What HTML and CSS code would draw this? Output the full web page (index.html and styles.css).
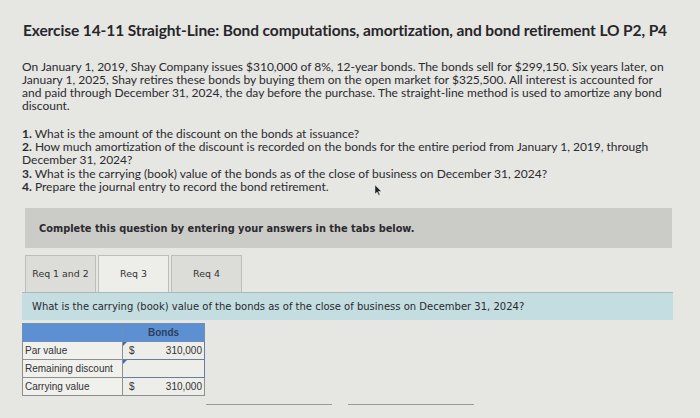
FILE: index.html
```html
<!DOCTYPE html>
<html>
<head>
<meta charset="utf-8">
<link rel="stylesheet" href="styles.css">
</head>
<body>
<div class="page">
  <h1 class="title">Exercise 14-11 Straight-Line: Bond computations, amortization, and bond retirement LO P2, P4</h1>
  <p class="intro">On January 1, 2019, Shay Company issues $310,000 of 8%, 12-year bonds. The bonds sell for $299,150. Six years later, on January 1, 2025, Shay retires these bonds by buying them on the open market for $325,500. All interest is accounted for and paid through December 31, 2024, the day before the purchase. The straight-line method is used to amortize any bond discount.</p>
  <ol class="questions">
    <li><b>1.</b> What is the amount of the discount on the bonds at issuance?</li>
    <li><b>2.</b> How much amortization of the discount is recorded on the bonds for the entire period from January 1, 2019, through December 31, 2024?</li>
    <li><b>3.</b> What is the carrying (book) value of the bonds as of the close of business on December 31, 2024?</li>
    <li><b>4.</b> Prepare the journal entry to record the bond retirement.</li>
  </ol>
  <svg class="cursor" width="8" height="12" viewBox="0 0 8 12"><path d="M1 1 L1 10 L3.1 8.1 L4.7 11.3 L5.9 10.7 L4.4 7.5 L7.2 7.3 Z" fill="#222" stroke="#ddd" stroke-width="0.5"/></svg>
  <div class="instruct">Complete this question by entering your answers in the tabs below.</div>
  <div class="tabs">
    <div class="tab">Req 1 and 2</div>
    <div class="tab active">Req 3</div>
    <div class="tab">Req 4</div>
  </div>
  <div class="prompt">What is the carrying (book) value of the bonds as of the close of business on December 31, 2024?</div>
  <div class="answer">
    <table class="grid">
      <tr class="head"><th class="lbl"></th><th class="val">Bonds</th></tr>
      <tr><td class="lbl">Par value</td><td class="val input"><span class="cur">$</span><span class="num">310,000</span></td></tr>
      <tr><td class="lbl">Remaining discount</td><td class="val input"><span class="cur"></span><span class="num"></span></td></tr>
      <tr><td class="lbl">Carrying value</td><td class="val"><span class="cur">$</span><span class="num">310,000</span></td></tr>
    </table>
  </div>
  <div class="navlines"><span class="line"></span><span class="line"></span></div>
</div>
</body>
</html>
```
FILE: styles.css
```css
html, body {
  margin: 0;
  padding: 0;
  background: #e6e6e2;
}
.page {
  position: relative;
  width: 700px;
  height: 418px;
  overflow: hidden;
  box-sizing: border-box;
  padding: 21px 0 0 22px;
  color: #2b2b30;
  font-family: Lato, "Open Sans", sans-serif;
}
.title {
  margin: 0 0 0 1px;
  font-size: 15.5px;
  font-weight: 700;
  line-height: 18px;
  letter-spacing: -0.1px;
  color: #26262b;
}
.intro {
  margin: 21px 0 0 0;
  width: 652px;
  font-size: 12px;
  line-height: 13px;
}
.questions {
  list-style: none;
  margin: 15px 0 0 0;
  padding: 0;
  width: 650px;
  font-size: 12px;
  line-height: 13.2px;
}
.questions b { font-weight: 700; }
.cursor {
  position: absolute;
  left: 374px;
  top: 184px;
}
.instruct {
  margin: 15px 0 0 3px;
  width: 647px;
  height: 40px;
  box-sizing: border-box;
  padding: 15px 0 0 14px;
  background: #cbcbc8;
  font-family: Verdana, "DejaVu Sans", sans-serif;
  font-weight: 700;
  font-size: 9.8px;
  color: #2a2a2e;
}
.tabs {
  display: flex;
  gap: 2px;
  margin: 7px 0 0 3px;
  height: 37px;
}
.tab {
  width: 71px;
  box-sizing: border-box;
  border: 1px solid #bdbdba;
  border-bottom: none;
  background: #dcdcd8;
  font-family: Verdana, "DejaVu Sans", sans-serif;
  font-size: 9.4px;
  color: #333;
  text-align: center;
  padding-top: 12px;
}
.tab.active {
  background: #ededea;
}
.prompt {
  width: 651px;
  height: 28px;
  box-sizing: border-box;
  border-top: 1px solid #a9b9bc;
  background: #c3dde1;
  font-family: Verdana, "DejaVu Sans", sans-serif;
  font-size: 10px;
  color: #2a2a2e;
  padding: 8px 0 0 10px;
}
.answer {
  margin-top: 3px;
}
.grid {
  border-collapse: collapse;
  font-family: Arial, "Liberation Sans", sans-serif;
  font-size: 10px;
  color: #333;
}
.grid td, .grid th {
  border: 1px solid #8f8f8f;
  height: 17px;
  padding: 0;
}
.grid .head th {
  background: #5d90d2;
  color: #2e3f60;
  font-weight: 700;
  height: 17px;
  border-color: #6f8fb5;
}
.grid td.lbl {
  width: 97px;
  padding-left: 2px;
  background: #f0f0ed;
}
.grid .val {
  width: 81px;
}
.grid td.val {
  background: #ededea;
}
.grid td.input {
  position: relative;
  border: 1px solid #6a7aa0;
}
.grid td.input::before {
  content: "";
  position: absolute;
  left: 0;
  top: 0;
  border-top: 4px solid #3a6fc0;
  border-right: 4px solid transparent;
}
.cur {
  display: inline-block;
  width: 26px;
  padding-left: 6px;
  box-sizing: border-box;
}
.num {
  display: inline-block;
  width: 53px;
  text-align: right;
}
.navlines {
  display: flex;
  gap: 16px;
  margin: 8px 0 0 184px;
}
.line {
  display: block;
  width: 126px;
  height: 1px;
  background: #9a9a9a;
}
```
